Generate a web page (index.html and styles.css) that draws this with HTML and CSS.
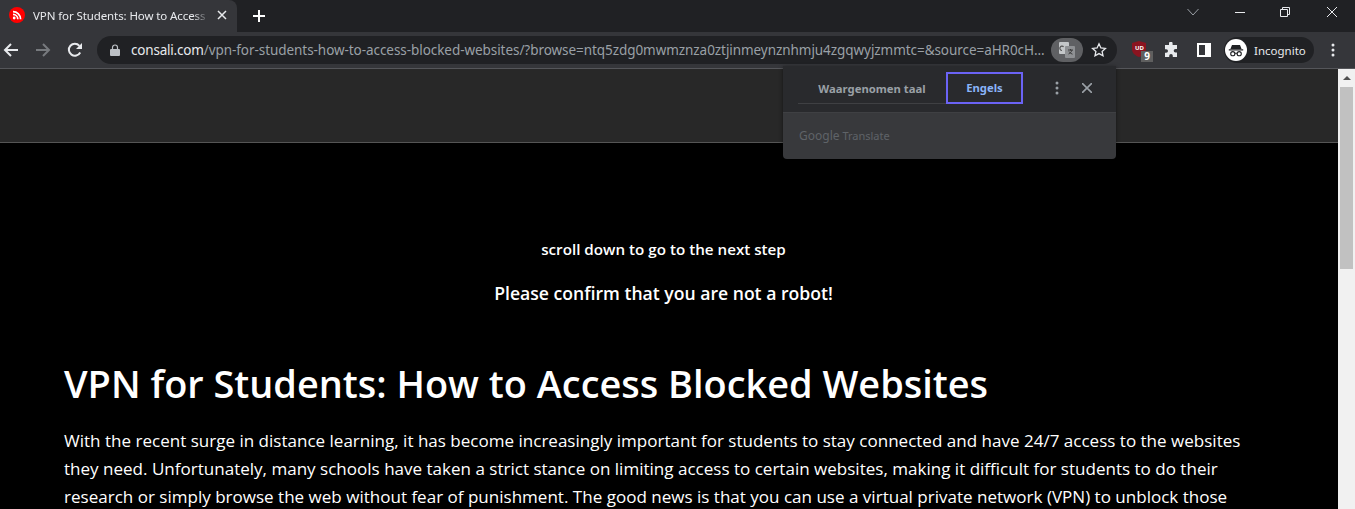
FILE: index.html
```html
<!DOCTYPE html>
<html lang="en">
<head>
  <meta charset="UTF-8" />
  <title>VPN for Students: How to Access Blocked Websites</title>
  <link rel="stylesheet" href="styles.css">
</head>
<body>

  <div class="tabstrip">
    <div class="tab">
      <svg class="favicon" viewBox="0 0 16 16" width="16" height="16">
        <circle cx="8" cy="8" r="8" fill="#f00"/>
        <circle cx="5.2" cy="11" r="1.4" fill="#fff"/>
        <path d="M4 7.4a4.8 4.8 0 0 1 4.8 4.8M4 4.6a7.6 7.6 0 0 1 7.6 7.6" fill="none" stroke="#fff" stroke-width="1.7"/>
      </svg>
      <span class="tab-title">VPN for Students: How to Access Blocked Websites</span>
      <svg class="tab-close" viewBox="0 0 10 10" width="10" height="10">
        <path d="M1 1l8 8M9 1l-8 8" stroke="#e8eaed" stroke-width="1.5"/>
      </svg>
    </div>
    <svg class="new-tab" viewBox="0 0 12 12" width="12" height="12">
      <path d="M6 0v12M0 6h12" stroke="#fff" stroke-width="2"/>
    </svg>
    <div class="window-controls">
      <svg viewBox="0 0 12 8" width="12" height="8"><path d="M.5 1l5.5 6 5.5-6" fill="none" stroke="#9aa0a6"/></svg>
      <svg class="ctrl-min" viewBox="0 0 10 1" width="10" height="1"><path d="M0 .5h10" stroke="#e8eaed"/></svg>
      <svg class="ctrl-restore" viewBox="0 0 10 10" width="10" height="10"><path d="M.5 2.5h7v7h-7zM2.5 2.5v-2h7v7h-2" fill="none" stroke="#e8eaed"/></svg>
      <svg class="ctrl-close" viewBox="0 0 10 10" width="10" height="10"><path d="M0 0l10 10M10 0L0 10" stroke="#e8eaed"/></svg>
    </div>
  </div>

  <div class="toolbar">
    <svg class="nav" viewBox="0 0 16 16" width="16" height="16"><path d="M15 8H2M8 2L2 8l6 6" fill="none" stroke="#e8eaed" stroke-width="2"/></svg>
    <svg class="nav" viewBox="0 0 16 16" width="16" height="16"><path d="M1 8h13M8 2l6 6-6 6" fill="none" stroke="#777a7e" stroke-width="2"/></svg>
    <svg class="nav" viewBox="0 0 16 16" width="16" height="16"><path d="M13.2 10.5A6 6 0 1 1 12.4 3.8" fill="none" stroke="#e8eaed" stroke-width="2"/><path d="M15 1v6H9z" fill="#e8eaed"/></svg>

    <div class="omnibox">
      <svg class="lock" viewBox="0 0 10 12" width="10" height="12"><path d="M2.5 5V3.5a2.5 2.5 0 0 1 5 0V5" fill="none" stroke="#bdc1c6" stroke-width="1.2"/><rect y="5" width="10" height="7" rx="1" fill="#bdc1c6"/></svg>
      <div class="url"><span class="host">consali.com</span>/vpn-for-students-how-to-access-blocked-websites/?browse=ntq5zdg0mwmznza0ztjinmeynznhmju4zgqwyjzmmtc=&amp;source=aHR0cH...</div>
      <div class="translate-btn">
        <svg viewBox="0 0 16 16" width="16" height="16"><rect width="10" height="12" rx="1" fill="#c4c7c9"/><rect x="6" y="4" width="10" height="12" rx="1" fill="#8f9194"/><path d="M3 8.500a2.200 2.200 0 1 1 1.600-3.800" fill="none" stroke="#555" stroke-width="1.200"/><path d="M9 8h5M11.500 7v1.500M13 8c-.5 2-2 3.500-3.500 4M10 9.500c.7 1.300 2 2.300 3.500 2.700" fill="none" stroke="#333" stroke-width=".9"/></svg>
      </div>
      <svg class="star" viewBox="0 0 16 16" width="16" height="16"><path d="M8 1.800l1.900 4.100 4.500.5-3.300 3 .9 4.400L8 11.600l-4 2.200.9-4.400-3.300-3 4.500-.5z" fill="none" stroke="#e8eaed" stroke-width="1.300"/></svg>
    </div>

    <div class="ublock">
      <svg viewBox="0 0 14 16" width="14" height="16"><path d="M7 0l7 2v6c0 4-3 6.500-7 8-4-1.500-7-4-7-8V2z" fill="#8a1420"/></svg>
      <span class="ublock-name">UD</span>
      <span class="ublock-count">9</span>
    </div>
    <svg class="puzzle" viewBox="0 0 16 16" width="16" height="16"><path d="M6 1.500a1.800 1.800 0 0 1 3.600 0V3H14v4h-1.500a1.800 1.800 0 0 0 0 3.600H14V15H9.800v-1.200a1.800 1.800 0 0 0-3.600 0V15H2v-4.200h1.200a1.800 1.800 0 0 0 0-3.600H2V3h4z" fill="#e8eaed"/></svg>
    <svg class="sidepanel" viewBox="0 0 14 14" width="14" height="14"><path fill-rule="evenodd" d="M0 0h14v14H0zM2 2v10h6V2z" fill="#fff"/></svg>
    <div class="incognito">
      <div class="incognito-icon">
        <svg viewBox="0 0 20 16" width="18" height="15"><path d="M5 1h10l2 5H3zM1 6.500h18V8H1z" fill="#202124"/><circle cx="6" cy="12" r="2.600" fill="none" stroke="#202124" stroke-width="1.400"/><circle cx="14" cy="12" r="2.600" fill="none" stroke="#202124" stroke-width="1.400"/><path d="M8.500 11.500h3" stroke="#202124" stroke-width="1.200"/></svg>
      </div>
      <span>Incognito</span>
    </div>
    <svg class="menu" viewBox="0 0 4 14" width="4" height="14"><circle cx="2" cy="2" r="1.500" fill="#e8eaed"/><circle cx="2" cy="7" r="1.500" fill="#e8eaed"/><circle cx="2" cy="12" r="1.500" fill="#e8eaed"/></svg>
  </div>

  <div class="viewport">
    <div class="page">
      <div class="site-header"></div>
      <div class="content">
        <p class="step-note">scroll down to go to the next step</p>
        <p class="robot-note">Please confirm that you are not a robot!</p>
        <h1>VPN for Students: How to Access Blocked Websites</h1>
        <p class="article-text">With the recent surge in distance learning, it has become increasingly important for students to stay connected and have 24/7 access to the websites they need. Unfortunately, many schools have taken a strict stance on limiting access to certain websites, making it difficult for students to do their research or simply browse the web without fear of punishment. The good news is that you can use a virtual private network (VPN) to unblock those</p>
      </div>
    </div>
    <div class="scrollbar">
      <div class="scroll-arrow"></div>
      <div class="scroll-thumb"></div>
    </div>

    <div class="translate-bubble">
      <div class="bubble-top">
        <div class="lang-tab">Waargenomen taal</div>
        <div class="lang-tab lang-active">Engels</div>
        <svg class="bubble-more" viewBox="0 0 4 14" width="4" height="14"><circle cx="2" cy="2" r="1.500" fill="#9aa0a6"/><circle cx="2" cy="7" r="1.500" fill="#9aa0a6"/><circle cx="2" cy="12" r="1.500" fill="#9aa0a6"/></svg>
        <svg class="bubble-close" viewBox="0 0 10 10" width="10" height="10"><path d="M0 0l10 10M10 0L0 10" stroke="#9aa0a6" stroke-width="1.600"/></svg>
      </div>
      <div class="bubble-bottom"><span class="google">Google</span> Translate</div>
    </div>
  </div>

</body>
</html>
```

FILE: styles.css
```css
html, body {
  height: 100%;
}

body {
  margin: 0;
  display: flex;
  flex-direction: column;
  overflow: hidden;
  background: #000;
  font-family: 'Open Sans', 'Noto Sans', sans-serif;
  color: #fff;
}

svg {
  display: block;
  flex: none;
}

/* tab strip */
.tabstrip {
  height: 32px;
  background: #202124;
  display: flex;
  align-items: center;
  flex: none;
}

.tab {
  width: 237px;
  height: 32px;
  box-sizing: border-box;
  background: #35363a;
  border-radius: 0 8px 0 0;
  display: flex;
  align-items: center;
  padding: 0 10px 2px 9px;
  gap: 8px;
}

.tab-title {
  width: 176px;
  overflow: hidden;
  white-space: nowrap;
  font-family: 'Noto Sans', sans-serif;
  font-size: 11.500px;
  letter-spacing: -0.1px;
  color: #e8eaed;
  -webkit-mask-image: linear-gradient(to right, #000 160px, transparent 176px);
  mask-image: linear-gradient(to right, #000 160px, transparent 176px);
}

.tab-close {
  margin-left: 2px;
}

.new-tab {
  margin-left: 16px;
}

.window-controls {
  margin: -8px 0 0 auto;
  display: flex;
  align-items: center;
  height: 24px;
  padding-right: 18px;
}

.ctrl-min {
  margin-left: 36px;
}

.ctrl-restore {
  margin-left: 35px;
}

.ctrl-close {
  margin-left: 37px;
}

/* toolbar */
.toolbar {
  height: 36px;
  background: #35363a;
  border-bottom: 1px solid #55565a;
  display: flex;
  align-items: center;
  padding-left: 3px;
  flex: none;
}

.nav {
  margin-right: 16px;
}

.omnibox {
  width: 1020px;
  height: 28px;
  margin-left: -2px;
  background: #202124;
  border-radius: 14px;
  display: flex;
  align-items: center;
  box-sizing: border-box;
  padding-left: 13px;
}

.url {
  width: 914px;
  margin-left: 11px;
  font-family: 'Noto Sans', sans-serif;
  font-size: 13.500px;
  letter-spacing: -0.06px;
  color: #9aa0a6;
  white-space: nowrap;
  overflow: hidden;
}

.host {
  letter-spacing: -0.2px;
  color: #e8eaed;
}

.translate-btn {
  width: 32px;
  height: 24px;
  margin-left: 6px;
  background: #5f6063;
  border-radius: 12px;
  display: flex;
  align-items: center;
  justify-content: center;
}

.star {
  margin-left: 8px;
}

.ublock {
  position: relative;
  width: 14px;
  height: 16px;
  margin: -3px 0 0 15px;
}

.ublock-name {
  position: absolute;
  top: 4px;
  left: 3px;
  font-size: 6px;
  line-height: 7px;
  font-weight: 700;
  color: #fff;
}

.ublock-count {
  position: absolute;
  top: 10px;
  left: 9px;
  width: 12px;
  height: 11px;
  background: #5f5f5f;
  font-size: 10px;
  font-weight: 700;
  line-height: 11px;
  text-align: center;
  color: #fff;
}

.puzzle {
  margin-left: 17px;
}

.sidepanel {
  margin-left: 18px;
}

.incognito {
  width: 90px;
  height: 26px;
  margin-left: 13px;
  background: #202124;
  border-radius: 13px;
  display: flex;
  align-items: center;
  gap: 7px;
  font-family: 'Noto Sans', sans-serif;
  font-size: 11.500px;
  color: #e8eaed;
}

.incognito-icon {
  width: 22px;
  height: 22px;
  margin-left: 1px;
  background: #fff;
  border-radius: 50%;
  display: flex;
  align-items: center;
  justify-content: center;
}

.incognito-icon svg {
  width: 16px;
  height: 13px;
}

.menu {
  margin-left: 17px;
}

/* page */
.viewport {
  flex: 1;
  display: flex;
  position: relative;
  min-height: 0;
}

.page {
  flex: 1;
  min-width: 0;
  overflow: hidden;
}

.site-header {
  height: 73px;
  background: #282828;
  border-bottom: 1px solid #555;
}

.content {
  padding: 96px 64px 0;
}

.step-note, .robot-note {
  margin: 0;
  padding-right: 11px;
  text-align: center;
  font-weight: 600;
}

.step-note {
  font-size: 15.200px;
  line-height: 20px;
}

.robot-note {
  margin-top: 24px;
  font-size: 17.600px;
  line-height: 20px;
}

h1 {
  margin: 56px 0 0;
  font-size: 37.900px;
  font-weight: 600;
  line-height: 48px;
  white-space: nowrap;
}

.article-text {
  margin: 20px 0 0;
  width: 1190px;
  font-size: 17.050px;
  line-height: 28px;
}

.scrollbar {
  width: 17px;
  background: #f1f1f1;
  flex: none;
}

.scroll-arrow {
  width: 0;
  margin: 7px auto 0;
  border: 4px solid transparent;
  border-top: 0;
  border-bottom: 4px solid #505050;
}

.scroll-thumb {
  height: 182px;
  margin: 7px 2px 0;
  background: #c1c1c1;
}

/* translate popup */
.translate-bubble {
  position: absolute;
  top: -3px;
  left: 783px;
  width: 333px;
  height: 93px;
  border-radius: 0 0 4px 4px;
  overflow: hidden;
  box-shadow: 0 1px 4px rgba(0, 0, 0, 0.5);
  font-family: 'Noto Sans', sans-serif;
}

.bubble-top {
  height: 47px;
  box-sizing: border-box;
  background: #292a2d;
  border-bottom: 1px solid #3f4043;
  display: flex;
  align-items: flex-start;
  padding: 6px 0 0 15px;
}

.lang-tab {
  width: 148px;
  height: 32px;
  box-sizing: border-box;
  border-bottom: 1px solid #3f4043;
  font-size: 11.300px;
  font-weight: 700;
  line-height: 33px;
  text-align: center;
  color: #9aa0a6;
}

.lang-active {
  width: 77px;
  border: 2px solid #6b63f5;
  line-height: 27px;
  color: #8ab4f8;
}

.bubble-more {
  margin: 9px 0 0 32px;
}

.bubble-close {
  margin: 11px 0 0 23px;
}

.bubble-bottom {
  height: 46px;
  background: #38393c;
  padding-left: 16px;
  font-size: 11px;
  line-height: 46px;
  color: #5f6368;
}

.google {
  font-size: 12px;
}
```
